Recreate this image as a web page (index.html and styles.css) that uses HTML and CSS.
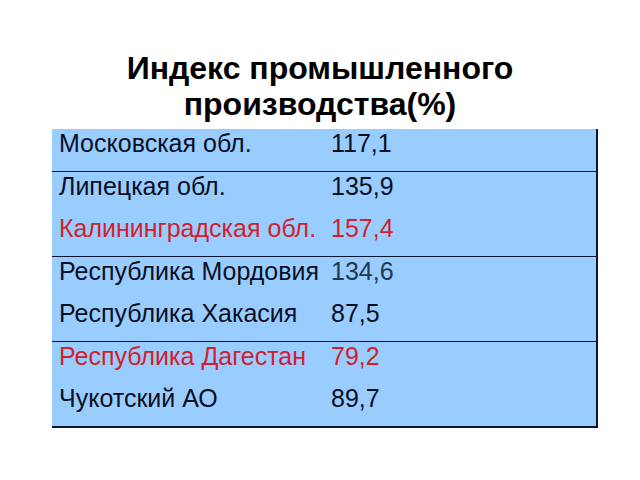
FILE: index.html
```html
<!DOCTYPE html>
<html lang="ru">
<head>
<meta charset="utf-8">
<title>Индекс промышленного производства</title>
<link rel="stylesheet" href="styles.css">
</head>
<body>
<h1 class="title">Индекс промышленного<br>производства(%)</h1>
<div class="table">
  <div class="group">
    <div class="row"><span>Московская обл.</span><span>117,1</span></div>
  </div>
  <div class="group">
    <div class="row"><span>Липецкая обл.</span><span>135,9</span></div>
    <div class="row red"><span>Калининградская обл.</span><span>157,4</span></div>
  </div>
  <div class="group">
    <div class="row"><span>Республика Мордовия</span><span class="slate">134,6</span></div>
    <div class="row"><span>Республика Хакасия</span><span>87,5</span></div>
  </div>
  <div class="group">
    <div class="row red"><span>Республика Дагестан</span><span>79,2</span></div>
    <div class="row"><span>Чукотский АО</span><span>89,7</span></div>
  </div>
</div>
</body>
</html>
```
FILE: styles.css
```css
html, body {
  margin: 0;
  padding: 0;
  background: #ffffff;
}
body {
  width: 640px;
  height: 480px;
  font-family: "Liberation Sans", Arial, sans-serif;
  color: #0b0f1f;
}
.title {
  margin: 0;
  padding-top: 50px;
  font-size: 32px;
  line-height: 36px;
  font-weight: bold;
  text-align: center;
  color: #000000;
}
.table {
  margin: 7px 0 0 52px;
  width: 544px;
  background: #99ccff;
  border-right: 2px solid #0b1530;
  border-bottom: 2px solid #0b1530;
}
.group {
  border-bottom: 1px solid #0b1530;
}
.group:last-child {
  border-bottom: none;
}
.row {
  display: grid;
  grid-template-columns: 272px 1fr;
  padding: 0 0 14px 7px;
  font-size: 25px;
  line-height: 28px;
  white-space: nowrap;
}
.red {
  color: #d21f2b;
}
.slate {
  color: #213a52;
}
```
